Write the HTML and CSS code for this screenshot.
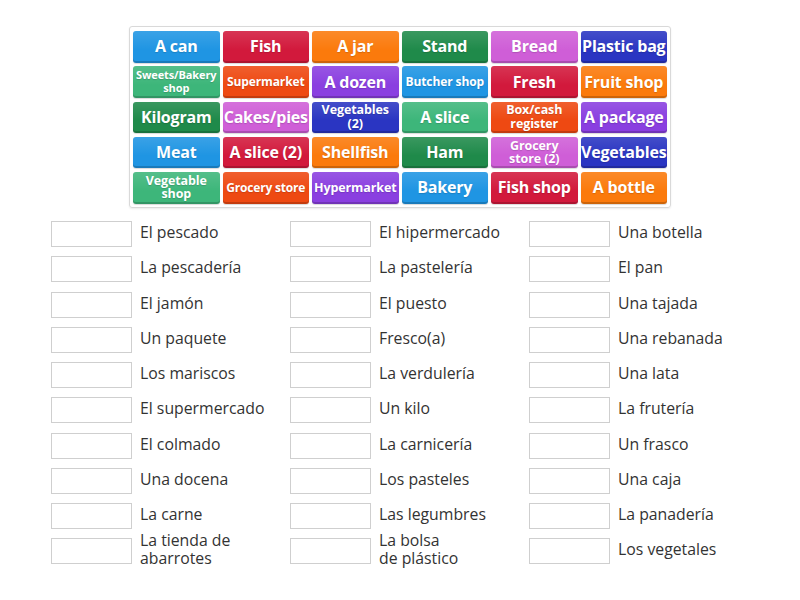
FILE: index.html
```html
<!DOCTYPE html>
<html>
<head>
<meta charset="utf-8">
<link rel="stylesheet" href="styles.css">
</head>
<body>
<div class="page">
  <div class="panel">
    <div class="tiles">
      <div class="tile blue big">A can</div>
      <div class="tile red big">Fish</div>
      <div class="tile orange big">A jar</div>
      <div class="tile dkgreen big">Stand</div>
      <div class="tile pink big">Bread</div>
      <div class="tile dkblue big">Plastic bag</div>

      <div class="tile ltgreen tiny">Sweets/Bakery<br>shop</div>
      <div class="tile redorange mid">Supermarket</div>
      <div class="tile purple big">A dozen</div>
      <div class="tile blue mid">Butcher shop</div>
      <div class="tile red big">Fresh</div>
      <div class="tile orange big">Fruit shop</div>

      <div class="tile dkgreen big">Kilogram</div>
      <div class="tile pink big">Cakes/pies</div>
      <div class="tile dkblue two">Vegetables<br>(2)</div>
      <div class="tile ltgreen big">A slice</div>
      <div class="tile redorange two">Box/cash<br>register</div>
      <div class="tile purple big">A package</div>

      <div class="tile blue big">Meat</div>
      <div class="tile red big">A slice (2)</div>
      <div class="tile orange big">Shellfish</div>
      <div class="tile dkgreen big">Ham</div>
      <div class="tile pink two">Grocery<br>store (2)</div>
      <div class="tile dkblue big">Vegetables</div>

      <div class="tile ltgreen two">Vegetable<br>shop</div>
      <div class="tile redorange small">Grocery store</div>
      <div class="tile purple hyper">Hypermarket</div>
      <div class="tile blue big">Bakery</div>
      <div class="tile red big">Fish shop</div>
      <div class="tile orange big">A bottle</div>
    </div>
  </div>

  <div class="answers">
    <div class="col">
      <div class="row"><span class="box"></span><span class="label">El pescado</span></div>
      <div class="row"><span class="box"></span><span class="label">La pescadería</span></div>
      <div class="row"><span class="box"></span><span class="label">El jamón</span></div>
      <div class="row"><span class="box"></span><span class="label">Un paquete</span></div>
      <div class="row"><span class="box"></span><span class="label">Los mariscos</span></div>
      <div class="row"><span class="box"></span><span class="label">El supermercado</span></div>
      <div class="row"><span class="box"></span><span class="label">El colmado</span></div>
      <div class="row"><span class="box"></span><span class="label">Una docena</span></div>
      <div class="row"><span class="box"></span><span class="label">La carne</span></div>
      <div class="row"><span class="box"></span><span class="label">La tienda de<br>abarrotes</span></div>
    </div>
    <div class="col">
      <div class="row"><span class="box"></span><span class="label">El hipermercado</span></div>
      <div class="row"><span class="box"></span><span class="label">La pastelería</span></div>
      <div class="row"><span class="box"></span><span class="label">El puesto</span></div>
      <div class="row"><span class="box"></span><span class="label">Fresco(a)</span></div>
      <div class="row"><span class="box"></span><span class="label">La verdulería</span></div>
      <div class="row"><span class="box"></span><span class="label">Un kilo</span></div>
      <div class="row"><span class="box"></span><span class="label">La carnicería</span></div>
      <div class="row"><span class="box"></span><span class="label">Los pasteles</span></div>
      <div class="row"><span class="box"></span><span class="label">Las legumbres</span></div>
      <div class="row"><span class="box"></span><span class="label">La bolsa<br>de plástico</span></div>
    </div>
    <div class="col">
      <div class="row"><span class="box"></span><span class="label">Una botella</span></div>
      <div class="row"><span class="box"></span><span class="label">El pan</span></div>
      <div class="row"><span class="box"></span><span class="label">Una tajada</span></div>
      <div class="row"><span class="box"></span><span class="label">Una rebanada</span></div>
      <div class="row"><span class="box"></span><span class="label">Una lata</span></div>
      <div class="row"><span class="box"></span><span class="label">La frutería</span></div>
      <div class="row"><span class="box"></span><span class="label">Un frasco</span></div>
      <div class="row"><span class="box"></span><span class="label">Una caja</span></div>
      <div class="row"><span class="box"></span><span class="label">La panadería</span></div>
      <div class="row"><span class="box"></span><span class="label">Los vegetales</span></div>
    </div>
  </div>
</div>
</body>
</html>
```

FILE: styles.css
```css
* { box-sizing: border-box; }
html, body { margin: 0; padding: 0; background: #fff; }
body { font-family: "Open Sans", "DejaVu Sans", sans-serif; width: 800px; height: 600px; overflow: hidden; }

.page { padding-top: 26px; }

.panel {
  width: 542px;
  height: 182px;
  margin: 0 auto;
  border: 1px solid #d9d9d9;
  border-radius: 3px;
  padding: 4px 3px 4px 3px;
  box-shadow: 0 1px 2px rgba(0,0,0,0.08);
}

.tiles {
  display: grid;
  grid-template-columns: repeat(6, 86.5px);
  grid-auto-rows: 31.5px;
  column-gap: 3px;
  row-gap: 3.75px;
}

.tile {
  display: flex;
  align-items: center;
  justify-content: center;
  text-align: center;
  color: #fff;
  font-weight: 700;
  border-radius: 3px;
  white-space: nowrap;
  box-shadow: inset 0 -2px 0 rgba(0,0,0,0.18), 0 1px 1px rgba(0,0,0,0.15);
  background-image: linear-gradient(rgba(255,255,255,0.12), rgba(255,255,255,0) 60%);
  text-shadow: 0 1px 1px rgba(0,0,0,0.15);
  padding-bottom: 1px;
}

.big { font-size: 16px; letter-spacing: -0.2px; }
.mid { font-size: 12px; letter-spacing: -0.1px; }
.hyper { font-size: 12.5px; letter-spacing: -0.1px; }
.small { font-size: 12px; letter-spacing: -0.2px; }
.two { font-size: 12.5px; line-height: 13.5px; letter-spacing: -0.1px; }
.tiny { font-size: 11px; line-height: 12.5px; letter-spacing: -0.1px; }

.blue { background-color: #1f95e3; }
.red { background-color: #d2193c; }
.orange { background-color: #fb7a0c; }
.dkgreen { background-color: #1f8a4a; }
.pink { background-color: #cf5ed7; }
.dkblue { background-color: #2a35c2; }
.ltgreen { background-color: #3db67a; }
.redorange { background-color: #ee4912; }
.purple { background-color: #8a3fe0; }

.answers {
  display: grid;
  grid-template-columns: repeat(3, 239px);
  padding-left: 51px;
  margin-top: 13px;
}

.col {
  display: flex;
  flex-direction: column;
  row-gap: 9.28px;
}

.row {
  display: flex;
  align-items: center;
  height: 26px;
}

.box {
  flex: none;
  width: 81px;
  height: 26px;
  border: 1px solid #cfcfcf;
  background: #fff;
}

.label {
  margin-left: 8px;
  font-size: 15.8px;
  line-height: 18px;
  color: #333;
  white-space: nowrap;
  margin-top: -4px;
}
```
